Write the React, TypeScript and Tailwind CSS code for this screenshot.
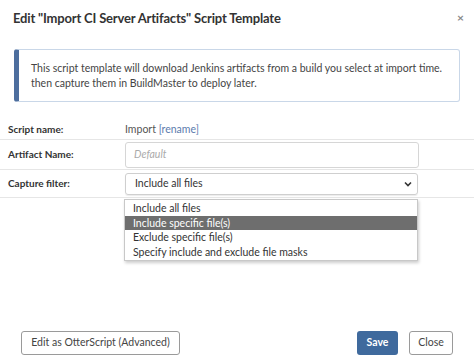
import React from "react";

export default function App() {
  const font = { fontFamily: 'Lato, "Noto Sans", sans-serif' };
  return (
    <div className="w-[474px] h-[364px] bg-white flex flex-col text-[#333]" style={font}>
      {/* header */}
      <div className="flex items-center justify-between pl-[13px] pr-[10px] pt-[8px] h-[27px]">
        <div className="text-[13px] font-bold leading-[18px] tracking-[-0.18px] text-[#333] whitespace-nowrap">Edit "Import CI Server Artifacts" Script Template</div>
        <div className="text-[12px] font-bold text-[#888] leading-none">×</div>
      </div>
      {/* info box */}
      <div className="mx-[14px] mt-[22px] h-[53px] border border-[#c9d7e8] border-l-[5px] border-l-[#4d6e9e] rounded-[3px] pl-[12px] flex flex-col justify-center text-[10.5px] leading-[15px] text-[#444] whitespace-nowrap">
        <div>This script template will download Jenkins artifacts from a build you select at import time.</div>
        <div>then capture them in BuildMaster to deploy later.</div>
      </div>
      {/* form rows */}
      <div className="mt-[18px] flex flex-col">
        <div className="flex items-center h-[20px] border-b border-[#e6e6e6]">
          <div className="w-[125px] pl-[8px] text-[10px] font-bold text-[#333]">Script name:</div>
          <div className="text-[10.5px] text-[#555]">
            Import <span className="text-[#5b7bae]">[rename]</span>
          </div>
        </div>
        <div className="flex items-center h-[30px] border-b border-[#e6e6e6]">
          <div className="w-[125px] pl-[8px] text-[10px] font-bold text-[#333]">Artifact Name:</div>
          <div className="w-[294px] h-[26px] border border-[#d6d6d6] rounded-[3px] pl-[8px] flex items-center text-[10.5px] italic text-[#aaa]">Default</div>
        </div>
        <div className="flex items-center h-[28px] border-b border-[#e6e6e6]">
          <div className="w-[125px] pl-[8px] text-[10px] font-bold text-[#333]">Capture filter:</div>
          <div className="w-[293px] h-[22px] border border-[#cfcfcf] rounded-[3px] pl-[9px] pr-[5px] flex items-center justify-between text-[10.5px] text-[#333] shadow-[0_1px_1px_rgba(0,0,0,0.08)]">
            <span>Include all files</span>
            <svg width="8" height="6" viewBox="0 0 8 6">
              <path d="M1 1.5 L4 4.5 L7 1.5" fill="none" stroke="#333" strokeWidth="1.6" />
            </svg>
          </div>
        </div>
        <div className="relative h-0">
          <div className="absolute left-[124px] top-[1px] w-[294px] border border-[#c8c8c8] bg-white shadow-[1px_2px_3px_rgba(0,0,0,0.2)] py-[1px] text-[10.5px] text-[#333] leading-[14.5px]">
            <div className="pl-[8px]">Include all files</div>
            <div className="pl-[8px] bg-[#6e6e6e] text-white">Include specific file(s)</div>
            <div className="pl-[8px]">Exclude specific file(s)</div>
            <div className="pl-[8px]">Specify include and exclude file masks</div>
          </div>
        </div>
      </div>
      <div className="flex-1" />
      {/* footer */}
      <div className="flex items-center pl-[21px] pr-[21px] pb-[9px]">
        <div className="h-[24px] w-[159px] border border-[#9a9a9a] rounded-[3px] flex items-center justify-center text-[10.5px] text-[#444]">Edit as OtterScript (Advanced)</div>
        <div className="flex-1" />
        <div className="h-[24px] w-[41px] bg-[#3f6a9d] rounded-[3px] flex items-center justify-center text-[10.5px] font-bold text-white">Save</div>
        <div className="ml-[11px] h-[24px] w-[44px] border border-[#9a9a9a] rounded-[3px] flex items-center justify-center text-[10.5px] text-[#444]">Close</div>
      </div>
    </div>
  );
}
